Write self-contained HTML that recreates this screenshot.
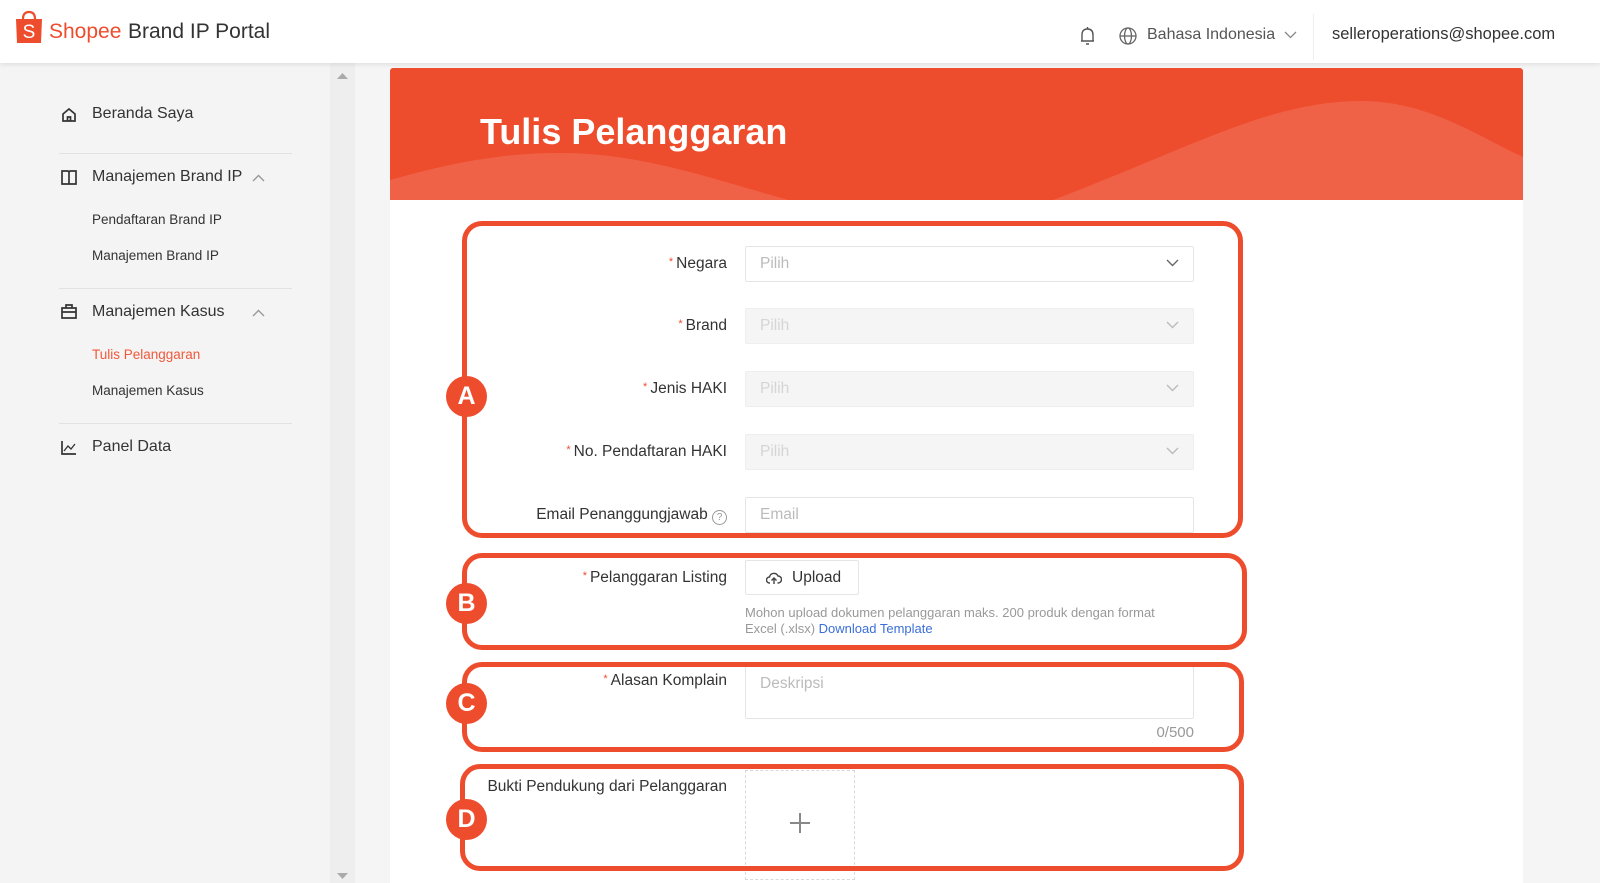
<!DOCTYPE html>
<html><head><meta charset="utf-8"><style>
*{box-sizing:border-box;margin:0;padding:0}
body{width:1600px;height:883px;overflow:hidden;background:#f5f5f5;font-family:"Liberation Sans",Arial,sans-serif;color:#333;position:relative}
.abs{position:absolute}
.hdr{left:0;top:0;width:1600px;height:63px;background:#fff;box-shadow:0 2px 4px rgba(0,0,0,.08);z-index:5}
.side{left:0;top:63px;width:330px;height:820px;background:#f4f4f4}
.scroll{left:330px;top:63px;width:25px;height:820px;background:#eeeeee}
.main{left:390px;top:68px;width:1133px;height:815px;background:#fff}
.banner{left:390px;top:68px;width:1133px;height:132px;background:#ee4d2d;overflow:hidden;border-radius:3px 3px 0 0}
.si{left:92px;font-size:16px;color:#333}
.sub{left:92px;font-size:13.5px;color:#333}
.dv{left:59px;width:233px;height:1px;background:#e2e2e2}
.lbl{right:873px;font-size:15.5px;color:#333;text-align:right;white-space:nowrap}
.lbl b{color:#ee4d2d;font-weight:normal;font-size:11px;vertical-align:3px;margin-right:3px}
.inp{left:745px;width:449px;height:36px;border:1px solid #e5e5e5;border-radius:2px;font-size:15.5px;color:#bbb;padding:8px 14px}
.dis{background:#f5f5f5;color:#d5d5d5;border-color:#eee}
.chev{position:absolute;right:14px;top:12px}
.box{border:5px solid #ee4d2d;border-radius:20px}
.cir{width:41px;height:41px;border-radius:50%;background:#ee4d2d;color:#fff;font-weight:bold;font-size:25px;text-align:center;line-height:41px}
</style></head><body>
<div class="abs hdr">
 <svg class="abs" style="left:15px;top:10px" width="28" height="34" viewBox="0 0 28 34"><path d="M8 9 Q8 2 14 2 Q20 2 20 9" fill="none" stroke="#ee4d2d" stroke-width="2.2"/><path d="M1 9 H27 L26 33 H2 Z" fill="#ee4d2d"/><text x="14" y="28" fill="#fff" font-size="19" font-family="Liberation Sans" text-anchor="middle">S</text></svg>
 <div class="abs" style="left:49px;top:20px;font-size:21px;color:#ee4d2d">Shopee</div>
 <div class="abs" style="left:128px;top:20px;font-size:21px;color:#333">Brand IP Portal</div>
 <svg class="abs" style="left:1079px;top:26px" width="17" height="20" viewBox="0 0 17 20"><path d="M3 15 V9 Q3 3 8.5 3 Q14 3 14 9 V15 H2 M15 15 H2 M7 18 H10" fill="none" stroke="#555" stroke-width="1.4"/><path d="M8.5 1v2" stroke="#555" stroke-width="1.4"/></svg>
 <svg class="abs" style="left:1119px;top:27px" width="18" height="18" viewBox="0 0 18 18" fill="none" stroke="#666" stroke-width="1.3"><circle cx="9" cy="9" r="8"/><ellipse cx="9" cy="9" rx="3.5" ry="8"/><path d="M1 9h16"/></svg>
 <div class="abs" style="left:1147px;top:26px;font-size:16px;color:#555">Bahasa Indonesia</div>
 <svg class="abs" style="left:1284px;top:31px" width="13" height="8"><path d="M1 1l5.5 5.5L12 1" fill="none" stroke="#888" stroke-width="1.3"/></svg>
 <div class="abs" style="left:1313px;top:14px;width:1px;height:46px;background:#eee"></div>
 <div class="abs" style="left:1332px;top:25px;font-size:16.5px;color:#333">selleroperations@shopee.com</div>
</div>
<div class="abs side"></div>
<div class="abs scroll"></div>
<svg class="abs" style="left:336px;top:72px" width="13" height="8"><path d="M1 7L6.5 1 12 7Z" fill="#aaa"/></svg>
<svg class="abs" style="left:336px;top:872px" width="13" height="8"><path d="M1 1L6.5 7 12 1Z" fill="#aaa"/></svg>

<svg class="abs" style="left:61px;top:107px" width="16" height="16" fill="none" stroke="#333" stroke-width="1.7"><path d="M2 7L8 2l6 5v7H2Z"/><path d="M6.5 14v-4h3v4"/></svg>
<div class="abs si" style="top:105px">Beranda Saya</div>
<div class="abs dv" style="top:153px"></div>
<svg class="abs" style="left:61px;top:170px" width="16" height="15" fill="none" stroke="#333" stroke-width="1.7"><path d="M1 1h6l1 1 1-1h6v13H1Z M8 2v12"/></svg>
<div class="abs si" style="top:168px">Manajemen Brand IP</div>
<svg class="abs" style="left:252px;top:174px" width="13" height="8"><path d="M1 7l5.5-5.5L12 7" fill="none" stroke="#999" stroke-width="1.4"/></svg>
<div class="abs sub" style="top:212px">Pendaftaran Brand IP</div>
<div class="abs sub" style="top:248px">Manajemen Brand IP</div>
<div class="abs dv" style="top:288px"></div>
<svg class="abs" style="left:61px;top:304px" width="16" height="15" fill="none" stroke="#333" stroke-width="1.7"><path d="M1 4h14v10H1Z M5 4V1h6v3 M1 8h14"/></svg>
<div class="abs si" style="top:303px">Manajemen Kasus</div>
<svg class="abs" style="left:252px;top:309px" width="13" height="8"><path d="M1 7l5.5-5.5L12 7" fill="none" stroke="#999" stroke-width="1.4"/></svg>
<div class="abs sub" style="top:347px;color:#f1583b">Tulis Pelanggaran</div>
<div class="abs sub" style="top:383px">Manajemen Kasus</div>
<div class="abs dv" style="top:423px"></div>
<svg class="abs" style="left:61px;top:440px" width="16" height="15" fill="none" stroke="#333" stroke-width="1.7"><path d="M1 1v13h14"/><path d="M3 11l4-5 3 3 4-5" stroke-width="1.3"/></svg>
<div class="abs si" style="top:438px">Panel Data</div>

<div class="abs main"></div>
<div class="abs banner">
 <svg class="abs" style="left:0;top:0" width="1133" height="132"><path d="M0 112 C60 95 110 85 171 85 C250 85 320 110 398 132 H0Z" fill="#f06248"/><path d="M663 132 C800 80 880 33 971 33 C1040 33 1090 70 1133 89 V132Z" fill="#f06248"/></svg>
 <div class="abs" style="left:90px;top:43px;font-size:36px;font-weight:bold;color:#fff">Tulis Pelanggaran</div>
</div>

<div class="abs lbl" style="top:255px"><b>*</b>Negara</div>
<div class="abs inp" style="top:246px">Pilih<svg class="chev" width="13" height="8"><path d="M1 1l5.5 5.5L12 1" fill="none" stroke="#666" stroke-width="1.4"/></svg></div>
<div class="abs lbl" style="top:317px"><b>*</b>Brand</div>
<div class="abs inp dis" style="top:308px">Pilih<svg class="chev" width="13" height="8"><path d="M1 1l5.5 5.5L12 1" fill="none" stroke="#bbb" stroke-width="1.4"/></svg></div>
<div class="abs lbl" style="top:380px"><b>*</b>Jenis HAKI</div>
<div class="abs inp dis" style="top:371px">Pilih<svg class="chev" width="13" height="8"><path d="M1 1l5.5 5.5L12 1" fill="none" stroke="#bbb" stroke-width="1.4"/></svg></div>
<div class="abs lbl" style="top:443px"><b>*</b>No. Pendaftaran HAKI</div>
<div class="abs inp dis" style="top:434px">Pilih<svg class="chev" width="13" height="8"><path d="M1 1l5.5 5.5L12 1" fill="none" stroke="#bbb" stroke-width="1.4"/></svg></div>
<div class="abs lbl" style="top:506px">Email Penanggungjawab <span style="display:inline-block;width:15px;height:15px;border:1px solid #999;border-radius:50%;font-size:10px;color:#999;text-align:center;line-height:13px;vertical-align:-1px">?</span></div>
<div class="abs inp" style="top:497px">Email</div>

<div class="abs lbl" style="top:569px"><b>*</b>Pelanggaran Listing</div>
<div class="abs" style="left:745px;top:560px;width:114px;height:35px;border:1px solid #e5e5e5;border-radius:2px;font-size:15.5px;color:#333;padding:8px 0 0 46px">Upload
 <svg class="abs" style="left:20px;top:10px" width="16" height="14" fill="none" stroke="#444" stroke-width="1.4"><path d="M4 12H3.5A3 3 0 0 1 3.5 6 A4.5 4.5 0 0 1 12 5 A3.5 3.5 0 0 1 12 12h-0.5"/><path d="M8 13V7M5.5 9.5L8 7l2.5 2.5"/></svg></div>
<div class="abs" style="left:745px;top:605px;font-size:13px;color:#999;line-height:16px">Mohon upload dokumen pelanggaran maks. 200 produk dengan format<br>Excel (.xlsx) <span style="color:#3a6fd8">Download Template</span></div>

<div class="abs lbl" style="top:672px"><b>*</b>Alasan Komplain</div>
<div class="abs inp" style="top:666px;height:53px">Deskripsi</div>
<div class="abs" style="left:1140px;top:724px;width:54px;text-align:right;font-size:15px;color:#999">0/500</div>

<div class="abs lbl" style="top:778px">Bukti Pendukung dari Pelanggaran</div>
<div class="abs" style="left:745px;top:770px;width:110px;height:110px;border:1px dashed #d9d9d9"></div>
<svg class="abs" style="left:789px;top:812px" width="22" height="22"><path d="M11 1v20M1 11h20" stroke="#888" stroke-width="2"/></svg>

<div class="abs box" style="left:462px;top:221px;width:781px;height:317px"></div>
<div class="abs box" style="left:462px;top:553px;width:785px;height:97px"></div>
<div class="abs box" style="left:462px;top:662px;width:782px;height:90px"></div>
<div class="abs box" style="left:460px;top:764px;width:784px;height:107px"></div>
<div class="abs cir" style="left:446px;top:376px">A</div>
<div class="abs cir" style="left:446px;top:583px">B</div>
<div class="abs cir" style="left:446px;top:683px">C</div>
<div class="abs cir" style="left:446px;top:799px">D</div>
</body></html>
